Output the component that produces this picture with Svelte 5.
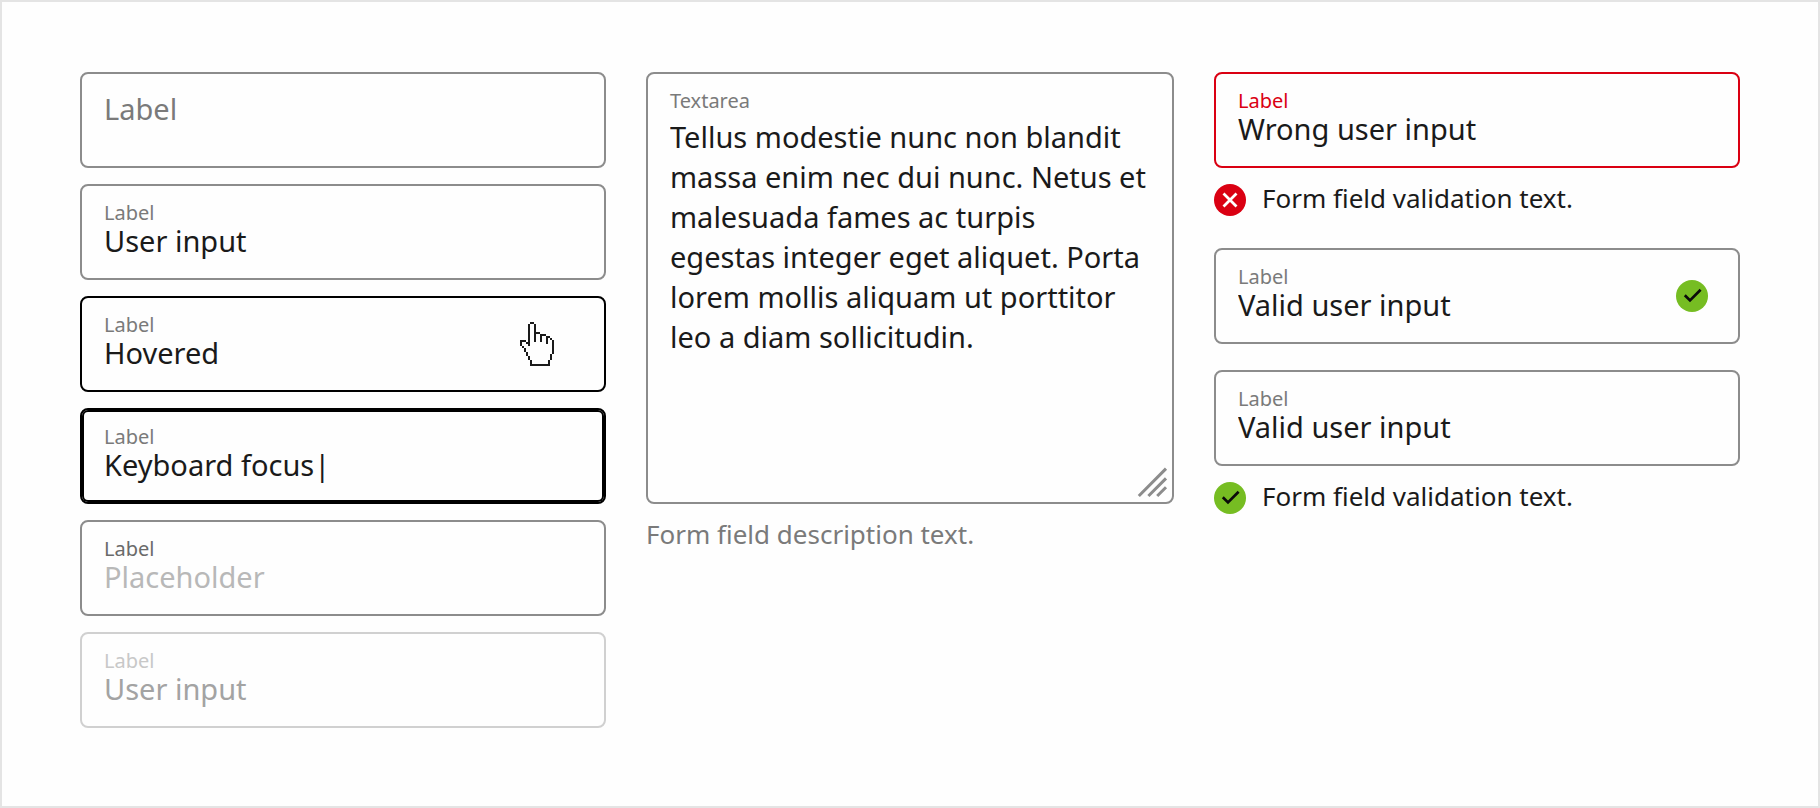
<!-- Overview of the form field states -->
<script lang="ts">
  type Field = {
    id: string;
    label: string;
    value?: string;
    placeholder?: string;
    state?: 'empty' | 'hovered' | 'focused' | 'placeholder' | 'disabled' | 'invalid' | 'valid';
    icon?: boolean;
    message?: string;
  };

  const states: Field[] = [
    { id: 'empty', label: 'Label', state: 'empty' },
    { id: 'filled', label: 'Label', value: 'User input' },
    { id: 'hovered', label: 'Label', value: 'Hovered', state: 'hovered' },
    { id: 'focused', label: 'Label', value: 'Keyboard focus|', state: 'focused' },
    { id: 'placeholder', label: 'Label', placeholder: 'Placeholder', state: 'placeholder' },
    { id: 'disabled', label: 'Label', value: 'User input', state: 'disabled' }
  ];

  const validation: Field[] = [
    { id: 'wrong', label: 'Label', value: 'Wrong user input', state: 'invalid', message: 'Form field validation text.' },
    { id: 'valid-icon', label: 'Label', value: 'Valid user input', state: 'valid', icon: true },
    { id: 'valid-text', label: 'Label', value: 'Valid user input', state: 'valid', message: 'Form field validation text.' }
  ];

  const text =
    'Tellus modestie nunc non blandit massa enim nec dui nunc. Netus et malesuada fames ac turpis\n' +
    'egestas integer eget aliquet. Porta lorem mollis aliquam ut porttitor leo a diam sollicitudin.';

  // pixel rows of the hand cursor
  const hand = [
    '.....XX..........',
    '....X..X.........',
    '....X..X.........',
    '....X..X.........',
    '....X..X.........',
    '....X..XXX.......',
    '....X..X..XXX....',
    '....X..X..X..XX..',
    '....X..X..X..X.X.',
    'XXX.X..X..X..X..X',
    'X..XX........X..X',
    'X...X...........X',
    '.X..............X',
    '..X.............X',
    '..X.............X',
    '...X............X',
    '...X...........X.',
    '....X..........X.',
    '....X..........X.',
    '.....X........X..',
    '.....X........X..',
    '.....XXXXXXXXXX..'
  ];
  const handPath = hand
    .map((row, y) => [...row].map((c, x) => (c === 'X' ? `M${x} ${y}h1v1h-1z` : '')).join(''))
    .join('');
</script>

{#snippet checkIcon()}
  <svg class="icon" viewBox="0 0 32 32" aria-hidden="true">
    <circle cx="16" cy="16" r="16" fill="#76bd22" />
    <path d="M8.8 15.2 14 20.4 24.6 9.8" fill="none" stroke="#0a0a0a" stroke-width="2.7" />
  </svg>
{/snippet}

{#snippet crossIcon()}
  <svg class="icon" viewBox="0 0 32 32" aria-hidden="true">
    <circle cx="16" cy="16" r="16" fill="#da0012" />
    <path d="M9.5 9.5l13 13M22.5 9.5l-13 13" stroke="#fff" stroke-width="2.8" />
  </svg>
{/snippet}

{#snippet textField(field: Field)}
  <div class="field {field.state ?? ''}">
    <div class="body">
      <label for={field.id}>{field.label}</label>
      <input
        id={field.id}
        type="text"
        value={field.value ?? ''}
        placeholder={field.placeholder}
        disabled={field.state === 'disabled'}
      />
    </div>
    {#if field.icon}
      {@render checkIcon()}
    {/if}
    {#if field.state === 'hovered'}
      <svg class="hand" viewBox="0 0 17 22" shape-rendering="crispEdges" aria-hidden="true">
        <path d={handPath} fill="#1a1a1a" />
      </svg>
    {/if}
  </div>
{/snippet}

<main>
  <section class="column">
    {#each states as field}
      {@render textField(field)}
    {/each}
  </section>

  <section class="column">
    <div class="field area">
      <div class="body">
        <label for="textarea">Textarea</label>
        <textarea id="textarea" rows="9" spellcheck="false" aria-describedby="description" value={text}></textarea>
      </div>
      <svg class="handle" viewBox="0 0 32 32" aria-hidden="true">
        <path d="M2.8 30 30 2.6M12.4 30 30 12.4M21.2 30 30 21.2" fill="none" stroke="#8c8c8c" stroke-width="3" />
      </svg>
    </div>
    <p class="description" id="description">Form field description text.</p>
  </section>

  <section class="column validation">
    {#each validation as field}
      <div class="group">
        {@render textField(field)}
        {#if field.message}
          <div class="message">
            {#if field.state === 'invalid'}
              {@render crossIcon()}
            {:else}
              {@render checkIcon()}
            {/if}
            <p>{field.message}</p>
          </div>
        {/if}
      </div>
    {/each}
  </section>
</main>

<style>
  :global(body) {
    margin: 0;
    background: #fefefe;
  }

  main {
    box-sizing: border-box;
    min-height: 100vh;
    padding: 70px 78px;
    border: 2px solid #e4e4e4;
    display: grid;
    grid-template-columns: 263fr 264fr 263fr;
    gap: 40px;
    align-items: start;
    color: #1a1a1a;
    font-family: 'Noto Sans', sans-serif;
    font-size: 26px;
    line-height: 28px;
  }

  .column,
  .group {
    display: flex;
    flex-direction: column;
    gap: 16px;
    min-width: 0;
  }

  .validation {
    gap: 26px;
  }

  .field {
    position: relative;
    display: flex;
    align-items: center;
    padding: 15px 22px 17px;
    border: 2px solid #8c8c8c;
    border-radius: 8px;
    background: #fefefe;
  }

  .body {
    flex: 1;
    min-width: 0;
    display: flex;
    flex-direction: column;
  }

  label {
    color: #7a7a7a;
    font-size: 20px;
    line-height: 24px;
  }

  input,
  textarea {
    box-sizing: border-box;
    width: 100%;
    padding: 0;
    border: 0;
    outline: 0;
    background: none;
    color: inherit;
    font-family: inherit;
    font-size: 29px;
    line-height: 40px;
  }

  input {
    height: 40px;
    margin: -4px 0 0;
  }

  input::placeholder {
    color: #b8b8b8;
    opacity: 1;
  }

  textarea {
    display: block;
    margin: 4px 0 8px;
    resize: none;
    overflow: hidden;
  }

  .empty label {
    font-size: 29px;
    line-height: 40px;
  }

  .empty input {
    height: 24px;
  }

  .hovered {
    border-color: #000;
  }

  .focused {
    border-color: #000;
    box-shadow: inset 0 0 0 2px #000;
  }

  .placeholder label {
    color: #6a6a6a;
  }

  .disabled {
    border-color: #d0d0d0;
    color: #a3a3a3;
  }

  .disabled label {
    color: #c8c8c8;
  }

  .invalid {
    border-color: #da0012;
  }

  .invalid label {
    color: #da0012;
  }

  .icon {
    flex: none;
    width: 32px;
    height: 32px;
  }

  .field .icon {
    margin: 2px 8px 0 0;
  }

  .hand {
    position: absolute;
    top: 24px;
    right: 50px;
    width: 34px;
    height: 44px;
  }

  .handle {
    position: absolute;
    right: 4px;
    bottom: 4px;
    width: 32px;
    height: 32px;
  }

  p {
    margin: 0;
  }

  .description {
    color: #7a7a7a;
  }

  .message {
    display: flex;
    gap: 16px;
    margin-bottom: 6px;
  }
</style>
